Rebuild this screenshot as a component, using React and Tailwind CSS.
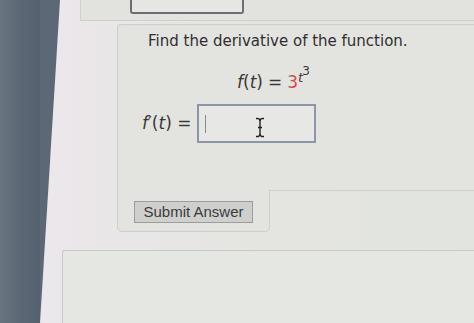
import React from 'react';

export default function App() {
  return (
    <div className="flex h-[323px] w-[474px] overflow-hidden bg-[#5d6876]" style={{ fontFamily: '"DejaVu Sans", sans-serif' }}>
      {/* screen bezel */}
      <div className="w-[40px] flex-none bg-gradient-to-r from-[#6a7481] via-[#5c6775] to-[#56616f]" />

      {/* page */}
      <div className="flex flex-1 flex-col bg-gradient-to-r from-[#ece7eb] via-[#e4e5e1] to-[#e2e4df] [clip-path:polygon(20px_0,100%_0,100%_100%,0_100%)]">
        {/* top strip with previous field */}
        <div className="ml-[40px] h-[21px] flex-none border-b border-l border-[#cfd0cc] bg-[#e2e2df]">
          <div className="ml-[49px] h-[14px] w-[114px] rounded-b-[3px] border-2 border-t-0 border-[#6b6f74] bg-[#e6e6e3]" />
        </div>

        {/* question card */}
        <div className="ml-[77px] mt-[3px] flex flex-none flex-col">
          <div className="h-[166px] rounded-tl-[4px] border-l border-t border-[#cdcfca] bg-[#e3e4e0] pl-[30px] pt-[7px]">
            <p className="text-[15px] leading-[19px] text-[#2f2f2f]">Find the derivative of the function.</p>

            <div className="mt-[18px] flex h-[26px] items-end pl-[89px] text-[17px] leading-[26px] text-[#383838]">
              <span className="italic">f</span>
              <span>(</span>
              <span className="italic">t</span>
              <span>)</span>
              <span className="mx-[5px]">=</span>
              <span className="text-[#d24a4a]">3</span>
              <span className="relative -top-[11px] text-[13px] italic leading-none">t</span>
              <span className="relative -top-[18px] -ml-[1px] text-[12px] leading-none">3</span>
            </div>

            <div className="-ml-[6px] mt-[9px] flex items-center gap-[6px]">
              <span className="text-[17px] text-[#383838]">
                <span className="italic">f</span>′(<span className="italic">t</span>) =
              </span>
              <div className="relative flex h-[39px] w-[119px] items-center border-2 border-[#8b97a8] bg-[#e7e8e5]">
                <div className="ml-[6px] h-[18px] w-px bg-[#8a8a8a]" />
                <svg className="absolute left-[56px] top-[11px]" width="10" height="21" viewBox="0 0 10 21" fill="none" stroke="#222" strokeWidth="1.4">
                  <path d="M1 1.5 Q5 1 5 4 V17 Q5 20 1 19.5" />
                  <path d="M9 1.5 Q5 1 5 4 M5 17 Q5 20 9 19.5" />
                  <path d="M3 10.5 H7" />
                </svg>
              </div>
            </div>
          </div>

          <div className="flex">
            <div className="h-[42px] w-[153px] flex-none rounded-b-[5px] border-b border-l border-r border-[#cdcfca] bg-[#e3e4e0] pl-[16px] pt-[10px]">
              <button
                className="h-[22px] w-[119px] border border-[#9c9d9c] bg-[#cfd0ce] text-[15px] leading-[20px] text-[#3b3b3b]"
                style={{ fontFamily: '"Liberation Sans", Arial, sans-serif' }}
              >
                Submit Answer
              </button>
            </div>
            <div className="flex-1 border-t border-[#cdcfca]" />
          </div>
        </div>

        {/* next panel */}
        <div className="ml-[22px] mt-[18px] flex-1 rounded-tl-[3px] border-l border-t border-[#c8cac5] bg-[#e5e7e2]" />
      </div>
    </div>
  );
}
